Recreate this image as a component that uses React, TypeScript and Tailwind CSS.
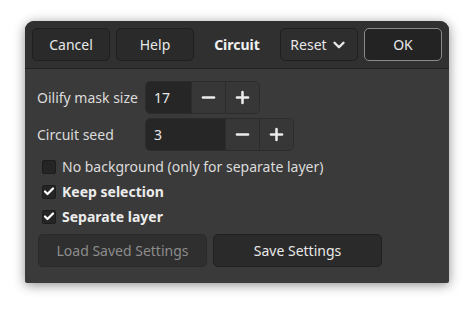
import { Check, ChevronDown, Minus, Plus } from "lucide-react";

const FONT = { fontFamily: '"Noto Sans", "Open Sans", sans-serif' };

const HeaderButton = ({ children, className = "" }: { children: React.ReactNode; className?: string }) => (
  <button
    className={`flex h-[33px] w-[78px] items-center justify-center rounded-[5px] border border-[#1f1f1f] bg-[#2a2a2a] text-[14px] text-[#e8e8e8] ${className}`}
  >
    {children}
  </button>
);

const SpinButton = ({
  value,
  entryWidth,
}: {
  value: string;
  entryWidth: string;
}) => (
  <div className="flex h-[33px] overflow-hidden rounded-[5px] border border-[#2c2c2c]">
    <div className={`flex items-center bg-[#262626] pl-[8px] text-[14px] text-[#e8e8e8] ${entryWidth}`}>
      {value}
    </div>
    <div className="flex w-[34px] items-center justify-center border-l border-[#2c2c2c] bg-[#373737] text-[#ececec]">
      <Minus size={19} strokeWidth={3.2} />
    </div>
    <div className="flex w-[34px] items-center justify-center border-l border-[#2c2c2c] bg-[#373737] text-[#ececec]">
      <Plus size={19} strokeWidth={3.2} />
    </div>
  </div>
);

const CheckRow = ({ label, checked }: { label: string; checked: boolean }) => (
  <div className="flex h-[25px] items-center gap-[6px] pl-[5px]">
    <div className="flex h-[14px] w-[14px] items-center justify-center rounded-[2px] border border-[#1c1c1c] bg-[#252525] text-white">
      {checked && <Check size={13} strokeWidth={4.5} />}
    </div>
    <span className={`text-[14px] ${checked ? "font-bold text-[#ececec]" : "text-[#dcdcdc]"}`}>{label}</span>
  </div>
);

const App = () => {
  return (
    <div className="h-[311px] w-[474px] bg-white pl-[25px] pt-[21px]" style={FONT}>
      <div className="flex h-[262px] w-[424px] flex-col overflow-hidden rounded-t-[9px] rounded-b-[2px] bg-[#3a3a3a] shadow-[0_2px_12px_rgba(0,0,0,0.45)]">
        {/* --- Header --- */}
        <div className="flex h-[48px] items-center border-b border-[#222222] bg-[#303030] px-[7px]">
          <HeaderButton>Cancel</HeaderButton>
          <HeaderButton className="ml-[6px]">Help</HeaderButton>
          <div className="flex-1 text-center text-[14px] font-bold text-[#f0f0f0]">Circuit</div>
          <HeaderButton className="w-[77px] gap-[3px] bg-[#2e2e2e]">
            Reset <ChevronDown size={18} strokeWidth={3.2} />
          </HeaderButton>
          <HeaderButton className="ml-[6px] border-[#8a8a8a] bg-[#232323]">OK</HeaderButton>
        </div>

        {/* --- Body --- */}
        <div className="flex flex-col px-[12px] pt-[12px]">
          <div className="flex items-center">
            <span className="w-[108px] text-[14px] text-[#dcdcdc]">Oilify mask size</span>
            <SpinButton value="17" entryWidth="w-[45px]" />
          </div>
          <div className="mt-[4px] flex items-center">
            <span className="w-[108px] text-[14px] text-[#dcdcdc]">Circuit seed</span>
            <SpinButton value="3" entryWidth="w-[79px]" />
          </div>
          <div className="mt-[3px] flex flex-col">
            <CheckRow label="No background (only for separate layer)" checked={false} />
            <CheckRow label="Keep selection" checked />
            <CheckRow label="Separate layer" checked />
          </div>
          <div className="mt-[5px] flex gap-[6px] pl-[1px]">
            <button className="flex h-[33px] w-[169px] items-center justify-center rounded-[5px] border border-[#2a2a2a] bg-[#2f2f2f] text-[14px] text-[#8c8c8c]">
              Load Saved Settings
            </button>
            <button className="flex h-[33px] w-[169px] items-center justify-center rounded-[5px] border border-[#1f1f1f] bg-[#2a2a2a] text-[14px] text-[#e8e8e8]">
              Save Settings
            </button>
          </div>
        </div>
      </div>
    </div>
  );
};

export default App;
